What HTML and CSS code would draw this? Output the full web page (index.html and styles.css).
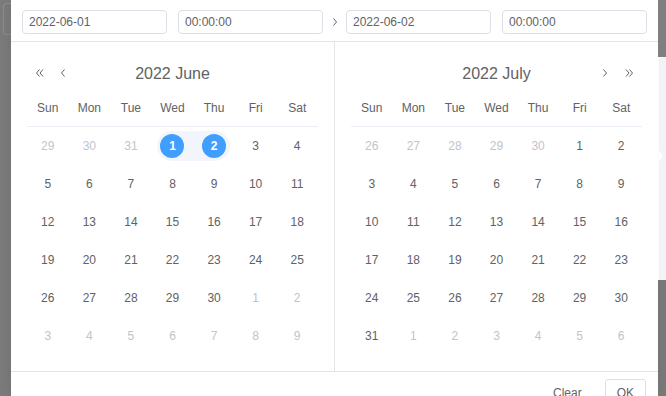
FILE: index.html
```html
<!DOCTYPE html>
<html lang="en">
<head>
  <meta charset="UTF-8" />
  <title>Date range picker</title>
  <link rel="stylesheet" href="styles.css">
</head>
<body>
<div class="screen">

  <!-- masked page behind the popper -->
  <div class="side side-left"><div class="ghost-input"></div></div>

  <div class="picker">
    <!-- editors -->
    <div class="time-header">
      <input class="editor" value="2022-06-01" readonly />
      <input class="editor" value="00:00:00" readonly />
      <span class="sep">
        <svg width="6" height="10" viewBox="0 0 6 10"><path d="M1.5 1.5 L4.5 5 L1.5 8.5" /></svg>
      </span>
      <input class="editor" value="2022-06-02" readonly />
      <input class="editor" value="00:00:00" readonly />
    </div>

    <div class="panels">
      <!-- June -->
      <div class="month">
        <div class="month-head">
          <div class="nav nav-left">
            <svg width="9" height="10" viewBox="0 0 9 10"><path d="M4.5 1.5 L1.5 5 L4.5 8.5 M8 1.5 L5 5 L8 8.5" /></svg>
            <svg width="6" height="10" viewBox="0 0 6 10"><path d="M4.5 1.5 L1.5 5 L4.5 8.5" /></svg>
          </div>
          <div class="title">2022 June</div>
          <div></div>
        </div>
        <div class="week"><span>Sun</span><span>Mon</span><span>Tue</span><span>Wed</span><span>Thu</span><span>Fri</span><span>Sat</span></div>
        <div class="days">
          <div class="cell off"><span>29</span></div><div class="cell off"><span>30</span></div><div class="cell off"><span>31</span></div>
          <div class="cell range-start picked"><span>1</span></div><div class="cell range-end picked"><span>2</span></div>
          <div class="cell"><span>3</span></div><div class="cell"><span>4</span></div>

          <div class="cell"><span>5</span></div><div class="cell"><span>6</span></div><div class="cell"><span>7</span></div><div class="cell"><span>8</span></div><div class="cell"><span>9</span></div><div class="cell"><span>10</span></div><div class="cell"><span>11</span></div>
          <div class="cell"><span>12</span></div><div class="cell"><span>13</span></div><div class="cell"><span>14</span></div><div class="cell"><span>15</span></div><div class="cell"><span>16</span></div><div class="cell"><span>17</span></div><div class="cell"><span>18</span></div>
          <div class="cell"><span>19</span></div><div class="cell"><span>20</span></div><div class="cell"><span>21</span></div><div class="cell"><span>22</span></div><div class="cell"><span>23</span></div><div class="cell"><span>24</span></div><div class="cell"><span>25</span></div>
          <div class="cell"><span>26</span></div><div class="cell"><span>27</span></div><div class="cell"><span>28</span></div><div class="cell"><span>29</span></div><div class="cell"><span>30</span></div><div class="cell off"><span>1</span></div><div class="cell off"><span>2</span></div>
          <div class="cell off"><span>3</span></div><div class="cell off"><span>4</span></div><div class="cell off"><span>5</span></div><div class="cell off"><span>6</span></div><div class="cell off"><span>7</span></div><div class="cell off"><span>8</span></div><div class="cell off"><span>9</span></div>
        </div>
      </div>

      <!-- July -->
      <div class="month">
        <div class="month-head">
          <div></div>
          <div class="title">2022 July</div>
          <div class="nav nav-right">
            <svg width="6" height="10" viewBox="0 0 6 10"><path d="M1.5 1.5 L4.5 5 L1.5 8.5" /></svg>
            <svg width="9" height="10" viewBox="0 0 9 10"><path d="M1 1.5 L4 5 L1 8.5 M4.5 1.5 L7.5 5 L4.5 8.5" /></svg>
          </div>
        </div>
        <div class="week"><span>Sun</span><span>Mon</span><span>Tue</span><span>Wed</span><span>Thu</span><span>Fri</span><span>Sat</span></div>
        <div class="days">
          <div class="cell off"><span>26</span></div><div class="cell off"><span>27</span></div><div class="cell off"><span>28</span></div><div class="cell off"><span>29</span></div><div class="cell off"><span>30</span></div><div class="cell"><span>1</span></div><div class="cell"><span>2</span></div>
          <div class="cell"><span>3</span></div><div class="cell"><span>4</span></div><div class="cell"><span>5</span></div><div class="cell"><span>6</span></div><div class="cell"><span>7</span></div><div class="cell"><span>8</span></div><div class="cell"><span>9</span></div>
          <div class="cell"><span>10</span></div><div class="cell"><span>11</span></div><div class="cell"><span>12</span></div><div class="cell"><span>13</span></div><div class="cell"><span>14</span></div><div class="cell"><span>15</span></div><div class="cell"><span>16</span></div>
          <div class="cell"><span>17</span></div><div class="cell"><span>18</span></div><div class="cell"><span>19</span></div><div class="cell"><span>20</span></div><div class="cell"><span>21</span></div><div class="cell"><span>22</span></div><div class="cell"><span>23</span></div>
          <div class="cell"><span>24</span></div><div class="cell"><span>25</span></div><div class="cell"><span>26</span></div><div class="cell"><span>27</span></div><div class="cell"><span>28</span></div><div class="cell"><span>29</span></div><div class="cell"><span>30</span></div>
          <div class="cell"><span>31</span></div><div class="cell off"><span>1</span></div><div class="cell off"><span>2</span></div><div class="cell off"><span>3</span></div><div class="cell off"><span>4</span></div><div class="cell off"><span>5</span></div><div class="cell off"><span>6</span></div>
        </div>
      </div>
    </div>

    <!-- footer -->
    <div class="footer">
      <span class="clear">Clear</span>
      <button class="ok">OK</button>
    </div>
  </div>

  <div class="side side-right">
    <div class="strip-dark"></div>
    <div class="strip-light"><span class="notch"></span></div>
  </div>

</div>
</body>
</html>
```

FILE: styles.css
```css
body {
  margin: 0;
  background: #7b7b7b;
  font-family: 'Liberation Sans', Arial, sans-serif;
  color: #606266;
}

.screen {
  display: flex;
  width: 666px;
  height: 396px;
  overflow: hidden;
}

/* masked background */
.side {
  flex: none;
}

.side-left {
  width: 11px;
}

.ghost-input {
  margin: 3px 0 0 3px;
  height: 30px;
  border: 1px solid #8c8c8c;
  border-right: none;
  border-radius: 4px 0 0 4px;
}

.side-right {
  width: 8px;
  display: flex;
  flex-direction: column;
}

.strip-dark {
  height: 57px;
  background: #7f7f7f;
}

.strip-light {
  height: 223px;
  background: #f3f3f6;
  border-left: 1px solid #fbfbfd;
  display: flex;
  align-items: flex-start;
}

.notch {
  margin-top: 94px;
  width: 0;
  height: 0;
  border-left: 4px solid #fff;
  border-top: 5px solid transparent;
  border-bottom: 5px solid transparent;
}

/* picker */
.picker {
  flex: none;
  width: 647px;
  background: #fff;
  box-shadow: 0 2px 12px rgba(0, 0, 0, 0.1);
}

.time-header {
  display: flex;
  align-items: flex-start;
  height: 31px;
  padding: 10px 11px 0;
  border-bottom: 1px solid #e4e4e4;
}

.editor {
  flex: none;
  width: 145px;
  height: 24px;
  box-sizing: border-box;
  margin: 0;
  padding: 0 6px;
  border: 1px solid #dcdfe6;
  border-radius: 4px;
  font-family: inherit;
  font-size: 12px;
  color: #606266;
  outline: none;
  background: #fff;
}

.editor + .editor {
  margin-left: 11px;
}

.sep {
  flex: none;
  width: 23px;
  height: 24px;
  display: flex;
  align-items: center;
  justify-content: center;
}

svg path {
  fill: none;
  stroke: #606266;
  stroke-width: 1;
}

.panels {
  display: flex;
}

.month {
  flex: none;
  width: 323px;
  padding: 16px;
  box-sizing: border-box;
}

.month + .month {
  width: 324px;
  border-left: 1px solid #e4e4e4;
}

.month-head {
  display: grid;
  grid-template-columns: 1fr auto 1fr;
  align-items: center;
  height: 28px;
}

.title {
  padding-top: 3px;
  font-size: 16px;
  color: #606266;
}

.nav {
  display: flex;
  align-items: center;
  padding-top: 1px;
}

.nav-left {
  padding-left: 8px;
  gap: 16px;
}

.nav-right {
  justify-content: flex-end;
  padding-right: 8px;
  gap: 17px;
}

.week {
  display: grid;
  grid-template-columns: repeat(7, 1fr);
  align-items: center;
  height: 37px;
  padding-top: 3px;
  border-bottom: 1px solid #ebeef5;
  text-align: center;
  font-size: 12px;
}

.days {
  display: grid;
  grid-template-columns: repeat(7, 1fr);
  font-size: 12px;
}

.cell {
  height: 30px;
  margin: 4px 0;
  display: flex;
  align-items: center;
  justify-content: center;
}

.cell span {
  width: 24px;
  height: 24px;
  line-height: 24px;
  text-align: center;
  border-radius: 50%;
}

.cell.off {
  color: #c0c4cc;
}

.cell.range-start {
  margin-left: 5px;
  padding-right: 5px;
  background: #f2f6fc;
  border-radius: 15px 0 0 15px;
}

.cell.range-end {
  margin-right: 5px;
  padding-left: 5px;
  background: #f2f6fc;
  border-radius: 0 15px 15px 0;
}

.cell.picked span {
  background: #409eff;
  color: #fff;
  font-weight: bold;
}

.footer {
  display: flex;
  justify-content: flex-end;
  align-items: center;
  padding: 7px 12px 0;
  border-top: 1px solid #e4e4e4;
}

.clear {
  font-size: 12px;
  color: #606266;
  margin-right: 23px;
}

.ok {
  height: 28px;
  padding: 0 11px;
  border: 1px solid #dcdfe6;
  border-radius: 3px;
  background: #fff;
  font-family: inherit;
  font-size: 12px;
  color: #606266;
}
```
